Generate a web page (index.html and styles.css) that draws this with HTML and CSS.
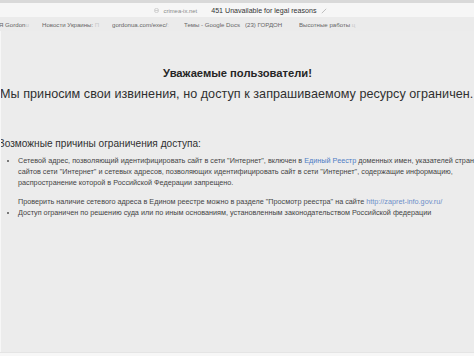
FILE: index.html
```html
<!DOCTYPE html>
<html lang="ru">
<head>
<meta charset="utf-8">
<title>451 Unavailable for legal reasons</title>
<link rel="stylesheet" href="styles.css">
</head>
<body>
<div class="window">
  <div class="topbar"></div>
  <div class="titlebar">
    <svg class="globe" width="5" height="5" viewBox="0 0 6 6"><circle cx="3" cy="3" r="2.5" fill="none" stroke="#c4c4c4" stroke-width="0.9"/><line x1="1" y1="3" x2="5" y2="3" stroke="#c4c4c4" stroke-width="0.9"/></svg>
    <span class="host">crimea-ix.net</span>
    <span class="title">451 Unavailable for legal reasons</span>
    <svg class="pen" width="6" height="6" viewBox="0 0 6 6"><line x1="0.8" y1="5.2" x2="5.2" y2="0.8" stroke="#b8b8b8" stroke-width="0.9"/></svg>
  </div>
  <div class="bookmarks">
    <span class="bm">Я Gordon<i>u</i></span>
    <span class="bm">Новости Украины: <i>П</i></span>
    <span class="bm">gordonua.com/exec/<i>:</i></span>
    <span class="bm">Темы - Google Docs</span>
    <span class="bm">(23) ГОРДОН</span>
    <span class="bm">Высотные работы <i>ц</i></span>
  </div>
  <main class="page">
    <h1 class="heading">Уважаемые пользователи!</h1>
    <p class="lead">Мы приносим свои извинения, но доступ к запрашиваемому ресурсу ограничен.</p>
    <h2 class="reasons">Возможные причины ограничения доступа:</h2>
    <ul class="list">
      <li>Сетевой адрес, позволяющий идентифицировать сайт в сети "Интернет", включен в <a class="link">Единый Реестр</a> доменных имен, указателей страниц<br>сайтов сети "Интернет" и сетевых адресов, позволяющих идентифицировать сайт в сети "Интернет", содержащие информацию,<br>распространение которой в Российской Федерации запрещено.
        <p class="check">Проверить наличие сетевого адреса в Едином реестре можно в разделе "Просмотр реестра" на сайте <a class="url">http://zapret-info.gov.ru/</a></p>
      </li>
      <li>Доступ ограничен по решению суда или по иным основаниям, установленным законодательством Российской федерации</li>
    </ul>
  </main>
  <div class="bottom"></div>
</div>
</body>
</html>
```
FILE: styles.css
```css
* { box-sizing: border-box; }
html, body {
  margin: 0;
  padding: 0;
  width: 474px;
  height: 356px;
  overflow: hidden;
  background: #f4f4f4;
  font-family: "Liberation Sans", Arial, sans-serif;
  color: #333;
}
.window {
  display: flex;
  flex-direction: column;
  height: 356px;
}
.topbar {
  height: 3px;
  background: #d9d9d9;
}
.titlebar {
  height: 14px;
  background: #f6f6f6;
  display: flex;
  align-items: center;
  justify-content: center;
  font-size: 7.1px;
  padding-top: 1px;
  padding-left: 7px;
}
.globe { margin-right: 4px; }
.host { color: #8a8a8a; font-size: 5.9px; margin-right: 14px; }
.title { color: #333; }
.pen { margin-left: 4px; }
.bookmarks {
  height: 14px;
  background: #ebebeb;
  display: grid;
  grid-template-columns: 43px 70px 72px 61px 54px 1fr;
  align-items: center;
  font-size: 6.1px;
  color: #666;
  white-space: nowrap;
  overflow: hidden;
  padding-top: 1px;
  margin-left: -1px;
}
.bm { overflow: hidden; padding-right: 4px; }
.bm i { font-style: normal; color: #c8c8c8; }
.page {
  flex: 1;
  background: #ececec;
  border-left: 2px solid #f7f7f7;
  margin-left: -1px;
  overflow: hidden;
  padding-top: 34px;
}
.heading {
  margin: 0;
  text-align: center;
  font-size: 11.2px;
  font-weight: bold;
  color: #262626;
  line-height: 16px;
}
.lead {
  margin: 5px 0 0 -1px;
  font-size: 12.6px;
  letter-spacing: 0.04px;
  line-height: 16px;
  white-space: nowrap;
  color: #303030;
}
.reasons {
  margin: 35px 0 0 -3px;
  font-size: 10.1px;
  font-weight: normal;
  line-height: 14px;
  white-space: nowrap;
  color: #303030;
}
.list {
  margin: 4px 0 0;
  padding-left: 17px;
  font-size: 7.25px;
  line-height: 11px;
  color: #444;
  white-space: nowrap;
  list-style: disc;
}
.list li::marker { color: #555; }
.check { margin: 8px 0 0; }
.link { color: #4f7cc4; }
.url { color: #6d8fc9; }
.bottom {
  height: 4px;
  background: #f7f7f7;
  border-top: 1px solid #e4e4e4;
}
```
